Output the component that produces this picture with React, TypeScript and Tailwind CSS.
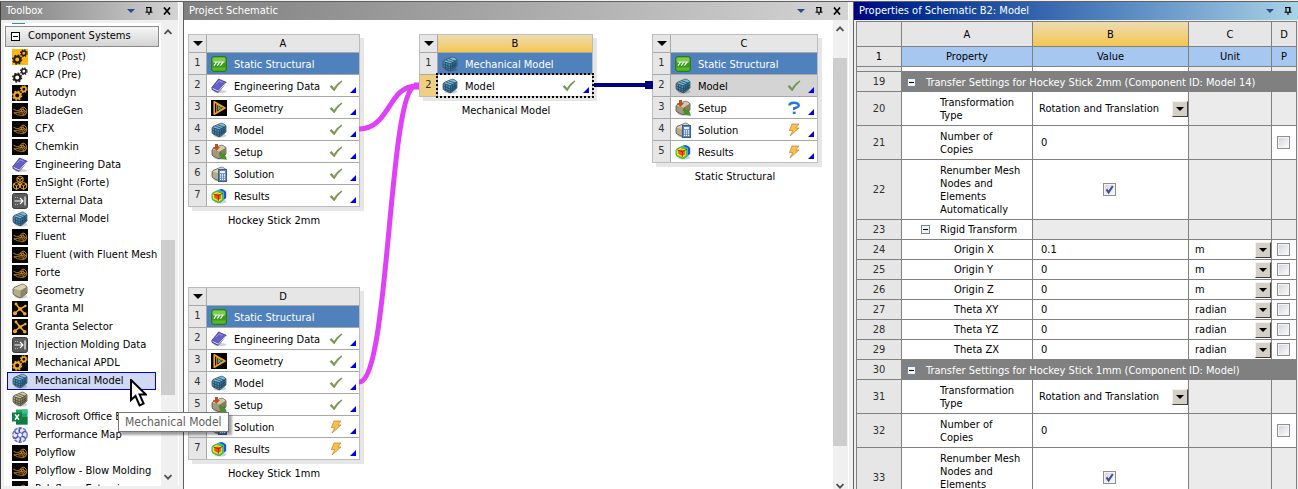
import React, { useState } from 'react';
import clsx from 'clsx';

type Status = 'ok' | 'update' | 'attention';
type IconName =
  | 'acpPost' | 'acpPre' | 'gears' | 'shell' | 'book' | 'ensight' | 'external' | 'meshBlue' | 'meshTan'
  | 'cube' | 'granta' | 'excel' | 'performance' | 'structural' | 'geometry' | 'setup' | 'solution' | 'results';

const Gears = ({ bg, fg }: { bg: string; fg: string }) => (
  <>
    <rect width="16" height="16" fill={bg} />
    <circle cx="5.2" cy="10.6" r="3" fill="none" stroke={fg} strokeWidth="2" />
    <circle cx="5.2" cy="10.6" r="4.4" fill="none" stroke={fg} strokeWidth="1.4" strokeDasharray="1.8 1.65" />
    <circle cx="11.8" cy="4.2" r="2.2" fill="none" stroke={fg} strokeWidth="1.5" />
    <circle cx="11.8" cy="4.2" r="3.3" fill="none" stroke={fg} strokeWidth="1.2" strokeDasharray="1.4 1.2" />
  </>
);

const Cube = ({ top, left, right, mesh }: { top: string; left: string; right: string; mesh?: string }) => (
  <>
    <ellipse cx="9" cy="13.5" rx="6.5" ry="2" fill="#000" opacity="0.18" />
    <path d="M1 6 2 4.5 10 1.2Q11 1 12 1.6L15 3.6V10L9.5 14.5Q8 15 7 14.5L2 12Q1 11.5 1 10Z" fill={left} stroke="#3a3f3c" strokeWidth="0.7" />
    <path d="M1.4 5.4 10 1.5Q11 1.2 12 1.8L14.7 3.8 8.4 7.6Z" fill={top} />
    <path d="M8.6 7.8 14.7 4V9.8L9.4 14.2 8.4 14.5Z" fill={right} />
    {mesh && (
      <path d="M8.4 7.6V14.6M1.4 5.6 8.4 7.7 14.8 3.9M1.2 8.2 8.4 11 14.9 6.8M3.6 6.2V12.8M6 7V14M10.8 6.4V13.2M12.9 5.2V11.6M4.3 4.2 10.6 6.3M7 2.9 12.8 5M1.8 10.8 8.4 13 14.8 8.8" fill="none" stroke={mesh} strokeWidth="0.7" />
    )}
  </>
);

const iconArt: Record<IconName, React.ReactNode> = {
  acpPost: <Gears bg="#fdb515" fg="#241a00" />,
  acpPre: <Gears bg="#ffffff" fg="#1c1c1c" />,
  gears: <Gears bg="#050505" fg="#f5aa1e" />,
  shell: (
    <>
      <rect width="16" height="16" fill="#050505" />
      <path d="M1.5 6.2Q5 9 8 7Q9 4 12 4Q15 6 14.8 9Q14 12.5 11 12.5Q5 12.5 1.8 9.8Q5 10 8 8.6M8.2 7Q11 5.4 13.4 8M8 8.6Q11 7 13.8 10.4M6.4 10Q9.4 9 12 12M9 6.2Q10 10 12.8 11.4M11 4.4Q10.6 8 14.4 9" fill="none" stroke="#d8921c" strokeWidth="0.8" />
    </>
  ),
  book: (
    <>
      <ellipse cx="9" cy="13.6" rx="6.5" ry="1.6" fill="#000" opacity="0.18" />
      <path d="M0.8 9.4 7.6 1 15.2 4.2 9 12.6 6.8 14.4 1 11.6Z" fill="#4a43a8" stroke="#2f2a78" strokeWidth="0.6" />
      <path d="M1.2 9.2 7.8 1.4 14.6 4.2 7.8 12.2Z" fill="#6660c4" />
      <path d="M1.6 10.4 7.4 13.2 14.7 5" fill="none" stroke="#e6e6f6" strokeWidth="1" />
      <path d="M5 6.2 8 2.8 11.6 4.4" fill="none" stroke="#a5a0ea" strokeWidth="0.8" />
    </>
  ),
  ensight: (
    <>
      <rect width="16" height="16" fill="#050505" />
      <path d="M8 1 11 2.7V6L8 7.6 5 6V2.7ZM4.5 7.4 7.6 9V12.6L4.5 14.4 1.4 12.6V9ZM11.5 7.4 14.6 9V12.6L11.5 14.4 8.4 12.6V9ZM5 2.7 8 4.4 11 2.7M8 4.4V7.6M1.4 9 4.5 10.8 7.6 9M4.5 10.8V14.4M8.4 9 11.5 10.8 14.6 9M11.5 10.8V14.4" fill="none" stroke="#eda51e" strokeWidth="1" />
    </>
  ),
  external: (
    <>
      <rect x="0.5" y="0.5" width="15" height="15" rx="2" fill="#5a5a5a" stroke="#3c3c3c" />
      <path d="M2.5 8H11M8 5 11 8 8 11M13 3.5V12.5" fill="none" stroke="#fff" strokeWidth="1.1" />
      <path d="M3 4.5H7M3 11.5H7" stroke="#bbb" strokeDasharray="1 1" />
    </>
  ),
  meshBlue: <Cube top="#7db9d8" left="#4b8fb8" right="#35759c" mesh="#1d4158" />,
  meshTan: <Cube top="#cfc8a6" left="#a89f7c" right="#8b8363" mesh="#46422e" />,
  cube: <Cube top="#d9d3b4" left="#b5ac88" right="#8d8566" />,
  granta: (
    <>
      <rect width="16" height="16" fill="#050505" />
      <path d="M4 3 8 8 13.4 5M8 8 3 12M8 8 12.5 12.5" stroke="#f5aa1e" strokeWidth="1.5" />
      <circle cx="4" cy="3" r="1.4" fill="#f5aa1e" />
      <circle cx="8" cy="8" r="1.8" fill="#f5aa1e" />
      <circle cx="13.4" cy="5" r="1.2" fill="#f5aa1e" />
      <circle cx="3" cy="12.2" r="2" fill="#f5aa1e" />
      <circle cx="12.8" cy="12.7" r="1.8" fill="#f5aa1e" />
    </>
  ),
  excel: (
    <>
      <path d="M4 0.5H15.5V15.5H4Z" fill="#21a366" />
      <path d="M10 0.5H15.5V4.5H10Z" fill="#33c481" />
      <path d="M4 8H15.5V15.5H4Z" fill="#107c41" />
      <path d="M0 3.5H10V12.5H0Z" fill="#107c41" />
      <path d="M3 5.4 7 10.8M7 5.4 3 10.8" stroke="#fff" strokeWidth="1.5" />
    </>
  ),
  performance: (
    <>
      <circle cx="8" cy="8" r="7.2" fill="#e4e6fa" stroke="#6a6fc4" strokeWidth="1.4" strokeDasharray="3.6 1" />
      <path d="M8 6Q6 3 8.6 1.2M10 7Q11.6 3.6 14 5M10 9.4Q13.6 9.6 13.4 12.4M8 10.2Q9.4 13.4 7 14.6M6 9Q4 12.4 2 10.4M6 6.6Q2.4 6.4 3 3.4" fill="none" stroke="#4d53b4" strokeWidth="1.5" />
      <circle cx="8" cy="8" r="2.4" fill="#fff" stroke="#4d53b4" />
    </>
  ),
  structural: (
    <>
      <rect x="0.5" y="0.5" width="15" height="15" rx="2.5" fill="#3a9a1c" stroke="#2b7d14" />
      <path d="M1.5 3Q1.5 1.5 3 1.5H13Q14.5 1.5 14.5 3V5.5H1.5Z" fill="#7ccb4c" />
      <path d="M2.5 6H13.5M3 9.6 5.4 6.4M6.2 9.6 8.6 6.4M9.4 9.6 11.8 6.4" stroke="#fff" strokeWidth="1.1" />
      <path d="M1.5 11.5H14.5V13Q14.5 14.5 13 14.5H3Q1.5 14.5 1.5 13Z" fill="#56b92c" />
    </>
  ),
  geometry: (
    <>
      <rect width="16" height="16" fill="#050505" />
      <path d="M3.2 1.8 14 8 3.2 14.2Z" fill="none" stroke="#f0a31c" strokeWidth="1.6" strokeLinejoin="round" />
      <path d="M5.8 4V12M5.8 4 11 7.2M8 10.8 12.4 8.2" stroke="#f0a31c" strokeWidth="1.1" />
      <path d="M7 5.8 10.6 8 7 10.4Z" fill="#2aa6d8" />
    </>
  ),
  setup: (
    <>
      <Cube top="#d0c9aa" left="#a39a78" right="#857d5e" />
      <path d="M4 0H7V3H9L5.5 7 2 3H4Z" fill="#c64a22" />
      <path d="M9 8.2 12 11 13.4 9.8 15.6 15.6 9.6 14.6 10.8 13 8 10Z" fill="#3f9a26" stroke="#2c6e1a" strokeWidth="0.4" />
    </>
  ),
  solution: (
    <>
      <Cube top="#d9d3b4" left="#b5ac88" right="#8d8566" />
      <rect x="7.5" y="3.5" width="8" height="12" fill="#5d83c4" stroke="#35599b" />
      <rect x="9" y="5" width="5" height="2.2" fill="#e6f0ff" />
      <path d="M9 9H14.4M9 11.2H14.4M9 13.4H14.4" stroke="#fff" strokeWidth="1.3" strokeDasharray="1.2 0.8" />
    </>
  ),
  results: (
    <>
      <ellipse cx="9" cy="13.5" rx="6.5" ry="2" fill="#000" opacity="0.18" />
      <path d="M0.8 6 2 4.4 9 1.2Q11 0.8 13 2L15.2 3.8V10L9.4 14.4Q8 15 6.6 14.4L1.6 12Q0.8 11.4 0.8 10Z" fill="#1e55d8" />
      <path d="M0.8 6 2 4.4 8 1.7 13 4V11.6L9.4 14.4Q8 15 6.6 14.4L1.6 12Q0.8 11.4 0.8 10Z" fill="#25c3c0" />
      <path d="M0.8 6 2 4.4 6.6 2.6 11.8 5V12.4L8.6 14.7 6.6 14.4 1.6 12Q0.8 11.4 0.8 10Z" fill="#4bc52c" />
      <path d="M1.6 6 5.6 4 10.8 5.8V11.4L8 13.4 2 11Z" fill="#f6e51d" />
      <path d="M3 6.4 6.4 5.4 9.8 6.6V10.4L7.4 12 3.4 10Z" fill="#ee5a1c" />
      <path d="M2.4 6 7.4 7.8V12.8M7.4 7.8 12 5.2" fill="none" stroke="#9b1d0c" strokeWidth="0.8" />
    </>
  ),
};

const Icon = ({ name }: { name: IconName }) => (
  <svg viewBox="0 0 16 16" className="size-4 shrink-0" aria-hidden="true">{iconArt[name]}</svg>
);

const StatusIcon = ({ status }: { status: Status }) => (
  <svg viewBox="0 0 14 14" className="size-[14px] shrink-0" aria-label={status}>
    {status === 'ok' && (
      <path d="M1 7.6 2.6 6.4 5 9.4Q8 4.4 12.6 1.8L13 2.4Q8.4 6 5.2 12Z" fill="#7a9c4c" stroke="#5d7c36" strokeWidth="0.5" />
    )}
    {status === 'update' && (
      <path d="M5 1H12L8.8 5H12L3 13 5.8 7.6H2.4Z" fill="#fbc04a" stroke="#c07c28" strokeWidth="0.7" />
    )}
    {status === 'attention' && (
      <>
        <path d="M2.4 4.6Q2.4 1.8 7 1.8T11.8 4.6Q11.8 6.4 7.2 7.2V9" fill="none" stroke="#2678d8" strokeWidth="2.4" />
        <rect x="5.8" y="10.6" width="2.8" height="2.4" fill="#2678d8" />
      </>
    )}
  </svg>
);

const barButton = 'flex h-[18px] w-[18px] items-center justify-center';

const TitleBar = ({ title, tone, closable = true }: { title: string; tone: 'gray' | 'blue'; closable?: boolean }) => (
  <header
    className={clsx(
      'flex h-[18px] shrink-0 items-center text-[11px] text-white',
      tone === 'gray'
        ? 'bg-linear-to-r from-[#808080] to-[#d4d4d4] pr-[2px] pl-[5px]'
        : 'bg-linear-to-r from-[#000080] to-[#a9d3e6] pr-px pl-[5px]'
    )}
  >
    <h2 className="flex-1 truncate">{title}</h2>
    <button className={barButton} aria-label="Panel menu">
      <svg viewBox="0 0 8 4" className="h-1 w-2"><path d="M0 0H8L4 4Z" fill="#2c4a8c" /></svg>
    </button>
    <button className={barButton} aria-label="Pin panel">
      <svg viewBox="0 0 8 8" className="size-2"><path d="M2 0V5M1 0.5H6.5M5.5 0V5M6 0V5M0.5 5.2H7.5M4 5V8" fill="none" stroke="#000" strokeWidth="1.1" /></svg>
    </button>
    {closable && (
      <button className={barButton} aria-label="Close panel">
        <svg viewBox="0 0 8 8" className="size-2"><path d="M1 0.5 7 7.5M7 0.5 1 7.5" stroke="#000" strokeWidth="1.7" /></svg>
      </button>
    )}
  </header>
);

const Chevron = ({ up }: { up?: boolean }) => (
  <svg viewBox="0 0 8 6" className="h-[6px] w-2 shrink-0">
    <path d={up ? 'M0.6 5 4 1.4 7.4 5' : 'M0.6 1 4 4.6 7.4 1'} fill="none" stroke="#505050" strokeWidth="1.8" />
  </svg>
);

const components: { name: string; icon: IconName }[] = [
  { name: 'ACP (Post)', icon: 'acpPost' },
  { name: 'ACP (Pre)', icon: 'acpPre' },
  { name: 'Autodyn', icon: 'gears' },
  { name: 'BladeGen', icon: 'shell' },
  { name: 'CFX', icon: 'shell' },
  { name: 'Chemkin', icon: 'shell' },
  { name: 'Engineering Data', icon: 'book' },
  { name: 'EnSight (Forte)', icon: 'ensight' },
  { name: 'External Data', icon: 'external' },
  { name: 'External Model', icon: 'meshBlue' },
  { name: 'Fluent', icon: 'shell' },
  { name: 'Fluent (with Fluent Mesh', icon: 'shell' },
  { name: 'Forte', icon: 'shell' },
  { name: 'Geometry', icon: 'cube' },
  { name: 'Granta MI', icon: 'granta' },
  { name: 'Granta Selector', icon: 'granta' },
  { name: 'Injection Molding Data', icon: 'external' },
  { name: 'Mechanical APDL', icon: 'gears' },
  { name: 'Mechanical Model', icon: 'meshBlue' },
  { name: 'Mesh', icon: 'meshTan' },
  { name: 'Microsoft Office Excel', icon: 'excel' },
  { name: 'Performance Map', icon: 'performance' },
  { name: 'Polyflow', icon: 'shell' },
  { name: 'Polyflow - Blow Molding', icon: 'shell' },
  { name: 'Polyflow - Extrusion', icon: 'shell' },
];

const Toolbox = () => {
  const [hovered, setHovered] = useState('Mechanical Model');

  return (
    <aside className="flex w-[183px] shrink-0 border-l border-[#404040] pb-[3px]">
      <div className="flex min-w-0 flex-1 flex-col">
        <TitleBar title="Toolbox" tone="gray" />
        <div className="mt-[3px] ml-[3px] flex min-h-0 flex-1">
          <div className="min-w-0 flex-1 overflow-hidden bg-white pr-[2px] text-[11px]">
            <div className="ml-2 h-px w-[13px] bg-[#2f8fae]" />
            <div className="mt-[2px] ml-px flex h-[21px] items-center gap-2 border border-[#8a8a8a] bg-linear-to-b from-[#f6f6f6] to-[#d4d4d4] pl-[5px]">
              <button className="flex size-[9px] items-center justify-center border border-black bg-white" aria-label="Collapse Component Systems">
                <span className="h-px w-[5px] bg-black" />
              </button>
              <span>Component Systems</span>
            </div>
            <ul className="mt-px">
              {components.map((item) => (
                <li key={item.name} className="px-[3px]">
                  <button
                    onMouseEnter={() => setHovered(item.name)}
                    className={clsx(
                      'flex h-[18px] w-full items-center gap-[7px] border pl-1 whitespace-nowrap',
                      hovered === item.name ? 'border-[#0000e0] bg-[#d0daf4]' : 'border-transparent'
                    )}
                  >
                    <Icon name={item.icon} />
                    {item.name}
                  </button>
                </li>
              ))}
            </ul>
          </div>
          <div className="mr-[3px] flex w-[14px] flex-col items-center bg-[#f0f0f0] pt-[6px] pb-[6px]">
            <Chevron up />
            <div className="flex min-h-0 w-full flex-1 flex-col py-1">
              <div className="grow-[201]" />
              <div className="grow-[155] bg-[#cdcdcd]" />
              <div className="grow-[75]" />
            </div>
            <Chevron />
          </div>
        </div>
      </div>
      <div className="w-[5px] border-l border-white" />
    </aside>
  );
};

interface Cell {
  label: string;
  icon: IconName;
  status?: Status;
  shaded?: boolean;
  selected?: boolean;
}

const staticStructural: Cell = { label: 'Static Structural', icon: 'structural' };

const buildSystem = (solved: Status): Cell[] => [
  staticStructural,
  { label: 'Engineering Data', icon: 'book', status: 'ok' },
  { label: 'Geometry', icon: 'geometry', status: 'ok' },
  { label: 'Model', icon: 'meshBlue', status: 'ok' },
  { label: 'Setup', icon: 'setup', status: 'ok' },
  { label: 'Solution', icon: 'solution', status: solved },
  { label: 'Results', icon: 'results', status: solved },
];

const systems: { id: string; place: string; active?: boolean; caption: string; cells: Cell[] }[] = [
  { id: 'A', place: 'left-[4px] top-[14px] w-[172px]', caption: 'Hockey Stick 2mm', cells: buildSystem('ok') },
  {
    id: 'B',
    place: 'left-[235px] top-[14px] w-[174px]',
    active: true,
    caption: 'Mechanical Model',
    cells: [
      { label: 'Mechanical Model', icon: 'meshBlue' },
      { label: 'Model', icon: 'meshBlue', status: 'ok', selected: true },
    ],
  },
  {
    id: 'C',
    place: 'left-[468px] top-[14px] w-[166px]',
    caption: 'Static Structural',
    cells: [
      staticStructural,
      { label: 'Model', icon: 'meshBlue', status: 'ok', shaded: true },
      { label: 'Setup', icon: 'setup', status: 'attention' },
      { label: 'Solution', icon: 'solution', status: 'update' },
      { label: 'Results', icon: 'results', status: 'update' },
    ],
  },
  { id: 'D', place: 'left-[4px] top-[267px] w-[172px]', caption: 'Hockey Stick 1mm', cells: buildSystem('update') },
];

const SystemBlock = ({ system }: { system: (typeof systems)[number] }) => (
  <section className={clsx('absolute text-[11px]', system.place)}>
    <div className="border border-[#bcbcbc] shadow-[4px_4px_0_#e6e6e6]">
      <div className="flex h-[18px] border-b border-[#a8a8a8]">
        <button className="flex w-[18px] items-center justify-center border-r border-[#a8a8a8] bg-[#e6e6e6]" aria-label={`System ${system.id} menu`}>
          <svg viewBox="0 0 10 5" className="h-[5px] w-[10px]"><path d="M0 0H10L5 5Z" /></svg>
        </button>
        <div className={clsx('flex flex-1 items-center justify-center pt-[2px]', system.active ? 'bg-linear-to-b from-[#ecdcb0] to-[#f5c64a]' : 'bg-[#e6e6e6]')}>
          {system.id}
        </div>
      </div>
      {system.cells.map((cell, i) => (
        <div key={i} className="flex h-[22px] border-b border-[#a8a8a8] last:h-[21px] last:border-b-0">
          <div className={clsx('flex w-[18px] items-center justify-center border-r border-[#a8a8a8] text-[#303030]', cell.selected ? 'bg-[#f0d080]' : 'bg-[#e6e6e6]')}>
            {i + 1}
          </div>
          <div
            className={clsx(
              'flex flex-1 items-center gap-[7px] pl-1',
              i === 0 ? 'bg-[#4f81bd] text-white' : cell.shaded ? 'bg-[#d4d4d4]' : 'bg-white',
              cell.selected && 'z-10 outline-2 outline-black outline-dotted'
            )}
          >
            <Icon name={cell.icon} />
            <span className="flex-1 pt-[3px] whitespace-nowrap">{cell.label}</span>
            {cell.status && (
              <>
                <StatusIcon status={cell.status} />
                <svg viewBox="0 0 6 6" className="mr-[3px] mb-[3px] size-[6px] self-end"><path d="M6 0V6H0Z" fill="#0000f0" /></svg>
              </>
            )}
          </div>
        </div>
      ))}
    </div>
    <p className="pt-[6px] text-center">{system.caption}</p>
  </section>
);

const ProjectSchematic = () => (
  <main className="flex min-w-0 flex-1 border-l border-[#606060]">
    <div className="flex min-w-0 flex-1 flex-col">
      <TitleBar title="Project Schematic" tone="gray" />
      <div className="flex min-h-0 flex-1">
        <div className="relative flex-1 overflow-hidden bg-white">
          {systems.map((system) => (
            <SystemBlock key={system.id} system={system} />
          ))}
          <svg className="pointer-events-none absolute top-0 left-0 h-full w-full" fill="none">
            <path d="M175 109C206 109 204 66 232 66M175 362C206 362 204 66 232 66" stroke="#e040f8" strokeWidth="5" />
            <path d="M230 66H235" stroke="#e040f8" strokeWidth="7" />
            <path d="M410 65H462" stroke="#000080" strokeWidth="4" />
            <path d="M461 61H469V69H461Z" fill="#000080" />
          </svg>
        </div>
        <div className="mr-px flex w-[14px] flex-col items-center bg-[#f0f0f0] pt-[6px]">
          <Chevron up />
          <div className="flex min-h-0 w-full flex-1 flex-col pt-[26px]">
            <div className="grow-[388] bg-[#cdcdcd]" />
            <div className="grow-[37]" />
          </div>
          <Chevron />
        </div>
      </div>
    </div>
    <div className="w-[5px] border-l border-white" />
  </main>
);

type Property =
  | { row: number; kind: 'section' | 'group'; label: string }
  | { row: number; kind: 'select' | 'number' | 'check'; label: string; value?: string }
  | { row: number; kind: 'quantity'; label: string; value: string; unit: string };

const properties: Property[] = [
  { row: 19, kind: 'section', label: 'Transfer Settings for Hockey Stick 2mm (Component ID: Model 14)' },
  { row: 20, kind: 'select', label: 'Transformation Type', value: 'Rotation and Translation' },
  { row: 21, kind: 'number', label: 'Number of Copies', value: '0' },
  { row: 22, kind: 'check', label: 'Renumber Mesh Nodes and Elements Automatically' },
  { row: 23, kind: 'group', label: 'Rigid Transform' },
  { row: 24, kind: 'quantity', label: 'Origin X', value: '0.1', unit: 'm' },
  { row: 25, kind: 'quantity', label: 'Origin Y', value: '0', unit: 'm' },
  { row: 26, kind: 'quantity', label: 'Origin Z', value: '0', unit: 'm' },
  { row: 27, kind: 'quantity', label: 'Theta XY', value: '0', unit: 'radian' },
  { row: 28, kind: 'quantity', label: 'Theta YZ', value: '0', unit: 'radian' },
  { row: 29, kind: 'quantity', label: 'Theta ZX', value: '0', unit: 'radian' },
  { row: 30, kind: 'section', label: 'Transfer Settings for Hockey Stick 1mm (Component ID: Model)' },
  { row: 31, kind: 'select', label: 'Transformation Type', value: 'Rotation and Translation' },
  { row: 32, kind: 'number', label: 'Number of Copies', value: '0' },
  { row: 33, kind: 'check', label: 'Renumber Mesh Nodes and Elements Automatically' },
];

const rowHeight: Record<Property['kind'], string> = {
  section: 'h-5',
  group: 'h-5',
  select: 'h-[34px]',
  number: 'h-[34px]',
  check: 'h-[60px]',
  quantity: 'h-5',
};

const line = 'border-r border-b border-[#808080]';

const DropDown = ({ label, value }: { label: string; value: string }) => (
  <div className="grid items-center">
    <select aria-label={label} className="col-start-1 row-start-1 h-4 w-full appearance-none bg-transparent pl-[6px] text-[11px] leading-4">
      <option>{value}</option>
    </select>
    <span className="pointer-events-none col-start-1 row-start-1 flex size-4 items-center justify-center justify-self-end border border-t-[#f4f2ee] border-r-[#404040] border-b-[#404040] border-l-[#f4f2ee] bg-[#d4d0c8]">
      <svg viewBox="0 0 8 4" className="h-1 w-2"><path d="M0 0H8L4 4Z" /></svg>
    </span>
  </div>
);

const CheckBox = ({ label, defaultChecked }: { label: string; defaultChecked?: boolean }) => (
  <span className="grid justify-items-center pr-[2px]">
    <input
      type="checkbox"
      aria-label={label}
      defaultChecked={defaultChecked}
      className="peer col-start-1 row-start-1 size-[13px] appearance-none border border-[#8e8f8f] bg-linear-to-br from-[#cfd2d8] to-white shadow-[inset_0_0_0_1px_#f4f4f4]"
    />
    <svg viewBox="0 0 13 13" className="pointer-events-none col-start-1 row-start-1 hidden size-[13px] peer-checked:block">
      <path d="M3.4 6.4 5.6 9.4 9.8 3" fill="none" stroke="#3c4f9a" strokeWidth="2" />
    </svg>
  </span>
);

const Expander = ({ label }: { label: string }) => (
  <button className="flex size-[9px] shrink-0 items-center justify-center border border-[#6c87a8] bg-[#f4f2ea]" aria-label={`Collapse ${label}`}>
    <span className="h-px w-[5px] bg-black" />
  </button>
);

const ValueBox = ({ label, value }: { label: string; value: string }) => (
  <input aria-label={label} defaultValue={value} className="block h-4 w-full bg-transparent pl-2 text-[11px] leading-4" />
);

const PropertyRow = ({ item }: { item: Property }) => {
  const number = <th className={clsx(line, 'bg-[#e6e6e6] font-normal text-[#303030]')}>{item.row}</th>;

  if (item.kind === 'section') {
    return (
      <tr className="h-5">
        {number}
        <td colSpan={4} className="bg-[#808080] text-white">
          <div className="flex items-center gap-[10px] pl-[5px]">
            <Expander label={item.label} />
            {item.label}
          </div>
        </td>
      </tr>
    );
  }

  if (item.kind === 'group') {
    return (
      <tr className="h-5">
        {number}
        <td className={line}>
          <div className="flex items-center gap-[10px] pl-[19px]">
            <Expander label={item.label} />
            {item.label}
          </div>
        </td>
        <td className={clsx(line, 'bg-[#ebebeb]')} />
        <td className={clsx(line, 'bg-[#ebebeb]')} />
        <td className={clsx(line, 'bg-[#ebebeb]')} />
      </tr>
    );
  }

  const hasParameter = item.kind === 'number' || item.kind === 'quantity';

  return (
    <tr className={rowHeight[item.kind]}>
      {number}
      <td className={clsx(line, 'pr-1', item.kind === 'quantity' ? 'pl-[52px]' : 'pl-[38px]')}>{item.label}</td>
      <td className={line}>
        {item.kind === 'select' && <DropDown label={item.label} value={item.value ?? ''} />}
        {hasParameter && <ValueBox label={item.label} value={item.value ?? ''} />}
        {item.kind === 'check' && <CheckBox label={item.label} defaultChecked />}
      </td>
      <td className={clsx(line, item.kind !== 'quantity' && 'bg-[#ebebeb]')}>
        {item.kind === 'quantity' && <DropDown label={`${item.label} unit`} value={item.unit} />}
      </td>
      <td className={clsx(line, !hasParameter && 'bg-[#ebebeb]')}>
        {hasParameter && <CheckBox label={`Parameterize ${item.label}`} />}
      </td>
    </tr>
  );
};

const PropertiesPanel = () => (
  <aside className="w-[445px] shrink-0 overflow-hidden border-l border-[#606060]">
    <TitleBar title="Properties of Schematic B2: Model" tone="blue" closable={false} />
    <div className="mt-px pr-px pl-[2px]">
      <table className="w-full table-fixed border-separate border-spacing-0 border-t border-l border-[#808080] bg-white text-[11px] leading-[13px]">
        <colgroup>
          <col className="w-[45px]" />
          <col className="w-[131px]" />
          <col className="w-[156px]" />
          <col className="w-[83px]" />
          <col />
        </colgroup>
        <thead>
          <tr className="h-[25px] bg-[#e6e6e6]">
            <th className={line} />
            <th className={clsx(line, 'font-normal')}>A</th>
            <th className={clsx(line, 'bg-linear-to-b from-[#ecdcb0] to-[#f5c64a] font-normal')}>B</th>
            <th className={clsx(line, 'font-normal')}>C</th>
            <th className={clsx(line, 'font-normal')}>D</th>
          </tr>
          <tr className="h-5 bg-[#a6c8f0]">
            <th className={clsx(line, 'bg-[#e6e6e6] font-normal')}>1</th>
            <th className={clsx(line, 'font-normal')}>Property</th>
            <th className={clsx(line, 'font-normal')}>Value</th>
            <th className={clsx(line, 'font-normal')}>Unit</th>
            <th className={clsx(line, 'font-normal')}>P</th>
          </tr>
        </thead>
        <tbody>
          <tr className="h-[5px]">
            <td className={clsx(line, 'bg-[#e6e6e6]')} />
            <td className={line} />
            <td className={line} />
            <td className={clsx(line, 'bg-[#ebebeb]')} />
            <td className={clsx(line, 'bg-[#ebebeb]')} />
          </tr>
          {properties.map((item) => (
            <PropertyRow key={item.row} item={item} />
          ))}
        </tbody>
      </table>
    </div>
  </aside>
);

const App: React.FC = () => {
  return (
    <div className="relative flex h-screen flex-col overflow-hidden bg-[#f0f0f0] font-['DejaVu_Sans_Condensed','DejaVu_Sans',sans-serif] text-black">
      <div className="h-[2px] shrink-0 border-b border-[#606060]" />
      <div className="flex min-h-0 flex-1">
        <Toolbox />
        <ProjectSchematic />
        <PropertiesPanel />
      </div>

      <div role="tooltip" className="absolute top-[412px] left-[118px] flex h-5 items-center border border-[#767676] bg-white px-[6px] text-xs text-[#606060] shadow-[3px_3px_2px_rgba(0,0,0,0.35)]">
        Mechanical Model
      </div>
      <svg viewBox="0 0 17 28" className="pointer-events-none absolute top-[379px] left-[130px] h-7 w-[17px]">
        <path d="M1 1V21L5.5 17 9.6 26.5 13.6 24.6 9.6 15.6H16Z" fill="#fff" stroke="#000" strokeWidth="2" />
      </svg>
    </div>
  );
};

export default App;
